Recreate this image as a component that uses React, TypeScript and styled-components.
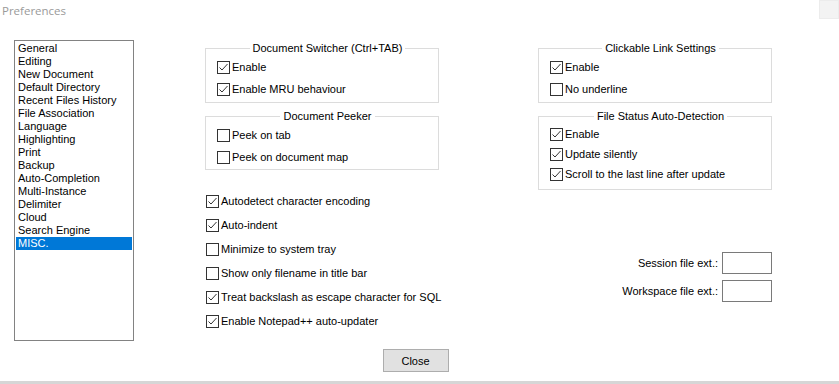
import React from 'react';
import styled, { createGlobalStyle } from 'styled-components';

const GlobalStyle = createGlobalStyle`
  html, body { margin: 0; padding: 0; background: #ffffff; }
  body { font-family: "Liberation Sans", Arial, sans-serif; font-size: 11px; color: #000; }
  * { box-sizing: border-box; }
`;

const Dialog = styled.div`
  width: 839px;
  height: 384px;
  display: flex;
  flex-direction: column;
  background: #ffffff;
  overflow: hidden;
`;

const TitleBar = styled.div`
  height: 22px;
  display: flex;
  align-items: flex-start;
  justify-content: space-between;
`;

const Title = styled.span`
  font-family: "Open Sans", "Noto Sans", sans-serif;
  font-size: 11.5px;
  line-height: 22px;
  color: #9a9a9a;
  padding-left: 2px;
`;

const CaptionGhost = styled.span`
  width: 20px;
  height: 19px;
  background: #f3f3f3;
  border: 1px solid #ececec;
`;

const Body = styled.div`
  display: flex;
  align-items: flex-start;
  padding: 18px 0 0 14px;
`;

const ListBox = styled.ul`
  width: 120px;
  height: 301px;
  margin: 0;
  padding: 1px;
  list-style: none;
  border: 1px solid #828282;
  flex-shrink: 0;
`;

const ListItem = styled.li<{ $selected?: boolean }>`
  height: 13px;
  line-height: 13px;
  padding-left: 2px;
  white-space: nowrap;
  background: ${(p) => (p.$selected ? '#0078d7' : 'transparent')};
  color: ${(p) => (p.$selected ? '#ffffff' : '#000000')};
`;

const Column = styled.div<{ $gap: number }>`
  width: 234px;
  margin-left: ${(p) => p.$gap}px;
  margin-top: 2px;
  display: flex;
  flex-direction: column;
  flex-shrink: 0;
`;

const Group = styled.fieldset<{ $mt?: number; $pb?: number }>`
  margin: ${(p) => p.$mt ?? 0}px 0 0 0;
  padding: 1px 0 ${(p) => p.$pb ?? 2}px 11px;
  border: 1px solid #dcdcdc;
  min-width: 0;
`;

const GroupTitle = styled.legend`
  margin: 0 auto;
  padding: 0 3px;
  line-height: 13px;
  font-size: 11px;
`;

const Row = styled.label<{ $h: number }>`
  height: ${(p) => p.$h}px;
  display: flex;
  align-items: center;
  gap: 2px;
  white-space: nowrap;
`;

const Box = styled.span`
  width: 13px;
  height: 13px;
  border: 1px solid #333333;
  background: #ffffff;
  display: inline-flex;
  flex-shrink: 0;
`;

const Options = styled.div<{ $mt: number }>`
  margin-top: ${(p) => p.$mt}px;
  padding-left: 1px;
  display: flex;
  flex-direction: column;
`;

const Fields = styled.div`
  margin-top: 62px;
  display: flex;
  flex-direction: column;
  gap: 6px;
`;

const FieldRow = styled.div`
  display: flex;
  justify-content: flex-end;
  align-items: center;
  gap: 4px;
`;

const FieldLabel = styled.span`
  white-space: nowrap;
`;

const TextBox = styled.span`
  width: 50px;
  height: 22px;
  border: 1px solid #7a7a7a;
  background: #ffffff;
  display: inline-block;
`;

const Footer = styled.div`
  display: flex;
  justify-content: center;
  padding-right: 8px;
  margin-top: 8px;
`;

const Button = styled.button`
  width: 66px;
  height: 23px;
  padding: 0;
  border: 1px solid #adadad;
  background: #e1e1e1;
  font-family: "Liberation Sans", Arial, sans-serif;
  font-size: 11px;
  color: #000;
`;

const BottomEdge = styled.div`
  margin-top: auto;
  height: 3px;
  background: #d6d6d6;
`;

const Check: React.FC<{ checked?: boolean; h: number; children: React.ReactNode }> = ({ checked, h, children }) => (
  <Row $h={h}>
    <Box>
      {checked && (
        <svg width="11" height="11" viewBox="0 0 11 11">
          <polyline points="1.5,5.5 4,8 9.5,2" fill="none" stroke="#333333" strokeWidth="1" />
        </svg>
      )}
    </Box>
    <span>{children}</span>
  </Row>
);

const pages = [
  'General', 'Editing', 'New Document', 'Default Directory', 'Recent Files History',
  'File Association', 'Language', 'Highlighting', 'Print', 'Backup', 'Auto-Completion',
  'Multi-Instance', 'Delimiter', 'Cloud', 'Search Engine', 'MISC.',
];

export default function App() {
  return (
    <>
      <GlobalStyle />
      <Dialog>
        <TitleBar>
          <Title>Preferences</Title>
          <CaptionGhost />
        </TitleBar>
        <Body>
          <ListBox>
            {pages.map((p) => (
              <ListItem key={p} $selected={p === 'MISC.'}>{p}</ListItem>
            ))}
          </ListBox>
          <Column $gap={71}>
            <Group>
              <GroupTitle>Document Switcher (Ctrl+TAB)</GroupTitle>
              <Check h={22} checked>Enable</Check>
              <Check h={22} checked>Enable MRU behaviour</Check>
            </Group>
            <Group $mt={7} $pb={1}>
              <GroupTitle>Document Peeker</GroupTitle>
              <Check h={22}>Peek on tab</Check>
              <Check h={22}>Peek on document map</Check>
            </Group>
            <Options $mt={19}>
              <Check h={24} checked>Autodetect character encoding</Check>
              <Check h={24} checked>Auto-indent</Check>
              <Check h={24}>Minimize to system tray</Check>
              <Check h={24}>Show only filename in title bar</Check>
              <Check h={24} checked>Treat backslash as escape character for SQL</Check>
              <Check h={24} checked>Enable Notepad++ auto-updater</Check>
            </Options>
          </Column>
          <Column $gap={99}>
            <Group>
              <GroupTitle>Clickable Link Settings</GroupTitle>
              <Check h={22} checked>Enable</Check>
              <Check h={22}>No underline</Check>
            </Group>
            <Group $mt={7} $pb={5}>
              <GroupTitle>File Status Auto-Detection</GroupTitle>
              <Check h={20} checked>Enable</Check>
              <Check h={20} checked>Update silently</Check>
              <Check h={20} checked>Scroll to the last line after update</Check>
            </Group>
            <Fields>
              <FieldRow>
                <FieldLabel>Session file ext.:</FieldLabel>
                <TextBox />
              </FieldRow>
              <FieldRow>
                <FieldLabel>Workspace file ext.:</FieldLabel>
                <TextBox />
              </FieldRow>
            </Fields>
          </Column>
        </Body>
        <Footer>
          <Button>Close</Button>
        </Footer>
        <BottomEdge />
      </Dialog>
    </>
  );
}
